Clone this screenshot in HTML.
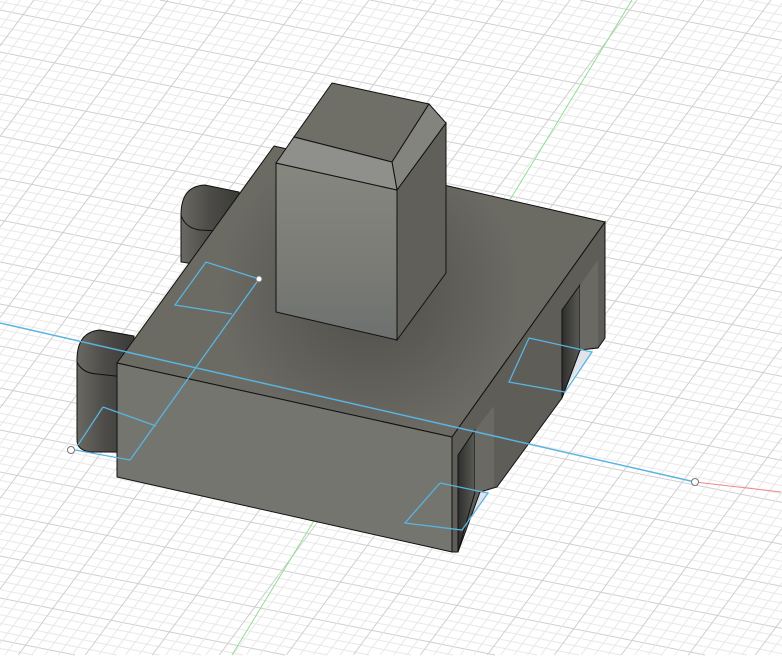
<!DOCTYPE html>
<html><head><meta charset="utf-8"><style>
html,body{margin:0;padding:0;background:#fff;width:782px;height:656px;overflow:hidden;}
svg{display:block;overflow:hidden;}
</style></head><body>
<svg id="s" width="782" height="656" viewBox="0 0 782 656" xmlns="http://www.w3.org/2000/svg" overflow="hidden">
<defs>
<linearGradient id="tf" x1="0" y1="0" x2="0" y2="1"><stop offset="0" stop-color="#86877f"/><stop offset="0.6" stop-color="#7a7b76"/><stop offset="1" stop-color="#6d706e"/></linearGradient>
<linearGradient id="dk" x1="0" y1="0" x2="1" y2="0"><stop offset="0" stop-color="#2e2e2c"/><stop offset="1" stop-color="#5a5a56"/></linearGradient>
<radialGradient id="sh" cx="370" cy="290" r="150" gradientUnits="userSpaceOnUse"><stop offset="0" stop-color="#4e4d49"/><stop offset="1" stop-color="#6b6a63"/></radialGradient>
<linearGradient id="bump" x1="0" y1="0" x2="1" y2="0"><stop offset="0" stop-color="#6a6963"/><stop offset="0.5" stop-color="#4c4b47"/><stop offset="1" stop-color="#3a3a37"/></linearGradient>
</defs>
<g id="grid"></g>
<line x1="632" y1="0" x2="232" y2="655" stroke="#8fe08f" stroke-width="1"/>
<line x1="695" y1="482" x2="781" y2="492" stroke="#e88" stroke-width="1"/>
<polygon points="562,398 580,350 592,352 562,392" fill="#dfe4ea"/>
<polygon points="458,490 488,492 462,530" fill="#dfe4ea"/>
<path d="M181,215 Q181,186 205,185 L239,192 L239,260 L200,265 L181,262 Z" fill="url(#bump)" stroke="#111" stroke-width="1"/>
<path d="M181,215 Q185,228 200,230 L239,232" fill="none" stroke="#111" stroke-width="1"/>
<path d="M77,360 Q77,332 100,330 L134,336 L134,452 L90,452 Q77,450 77,440 Z" fill="url(#bump)" stroke="#111" stroke-width="1"/>
<path d="M77,362 Q82,373 97,374 L134,378" fill="none" stroke="#111" stroke-width="1"/>
<polygon points="274,146 605,222 452,437 117,363" fill="url(#sh)" stroke="#111" stroke-width="1"/>
<polygon points="452,437 605,222 605,338 598,348 580,350 562,398 497,487 480,492 458,552 452,552" fill="#5e5d58" stroke="#111" stroke-width="1"/>
<polygon points="562,310 580,285 580,350 562,398" fill="url(#dk)" stroke="#111" stroke-width="1"/>
<polygon points="580,285 598,260 598,346 580,350" fill="#6a6964"/>
<polygon points="458,455 475,430 475,492 458,552" fill="url(#dk)" stroke="#111" stroke-width="1"/>
<polygon points="475,430 494,406 494,486 480,492 475,492" fill="#6a6964"/>
<polygon points="117,363 452,437 452,552 117,477" fill="#74756f" stroke="#111" stroke-width="1"/>
<polygon points="276,163 397,190 397,340 276,312" fill="url(#tf)" stroke="#111" stroke-width="1"/>
<polygon points="397,190 446,123 446,273 397,340" fill="#605f59" stroke="#111" stroke-width="1"/>
<polygon points="332,83 429,104 392,162 294,137" fill="#6f6e67" stroke="#111" stroke-width="1"/>
<polygon points="429,104 446,123 397,190 392,162" fill="#83847e" stroke="#111" stroke-width="1"/>
<polygon points="294,137 392,162 397,190 276,163" fill="#8f908b" stroke="#111" stroke-width="1"/>
<line x1="0" y1="323" x2="695" y2="482" stroke="#5ab4e0" stroke-width="1.5"/>
<g fill="none" stroke="#5ab4e0" stroke-width="1.3">
<polyline points="259,279 130,460 75,450"/>
<polyline points="259,279 206,262 175,305 232,314"/>
<polyline points="103,407 156,426"/>
<polyline points="103,407 78,445"/>
<polyline points="529,338 592,352 565,392 509,382 529,338"/>
<polyline points="440,483 488,493 462,530 405,523 440,483"/>
</g>
<g fill="#fff" stroke="#777" stroke-width="1">
<circle cx="71" cy="450" r="3.5"/>
<circle cx="259" cy="279" r="3"/>
<circle cx="695" cy="482" r="3.5"/>
</g>
</svg>
<script>
(function(){
var g=document.getElementById('grid'),h='',W=782,H=655;
function ln(x1,y1,x2,y2,col){h+='<line x1="'+x1.toFixed(1)+'" y1="'+y1.toFixed(1)+'" x2="'+x2.toFixed(1)+'" y2="'+y2.toFixed(1)+'" stroke="'+col+'" stroke-width="1"/>';}
for(var i=-40;i<120;i++){
 var c=-200+i*8.4, col=(i%5===0)?'#cfcfcf':'#e8e8e8';
 // y=c+0.2x, x in [0,W], y in [0,H]
 var xa=Math.max(0,(0-c)/0.2), xb=Math.min(W,(H-c)/0.2);
 if(xb>xa) ln(xa,c+0.2*xa,xb,c+0.2*xb,col);
}
for(var j=-20;j<140;j++){
 var d=-100+j*13.4, col2=(j%5===0)?'#cfcfcf':'#e8e8e8';
 // x=d-0.74y
 var ya=Math.max(0,(d-W)/0.74), yb=Math.min(H,d/0.74);
 if(yb>ya) ln(d-0.74*ya,ya,d-0.74*yb,yb,col2);
}
g.innerHTML=h;
})();
</script>
</body></html>
